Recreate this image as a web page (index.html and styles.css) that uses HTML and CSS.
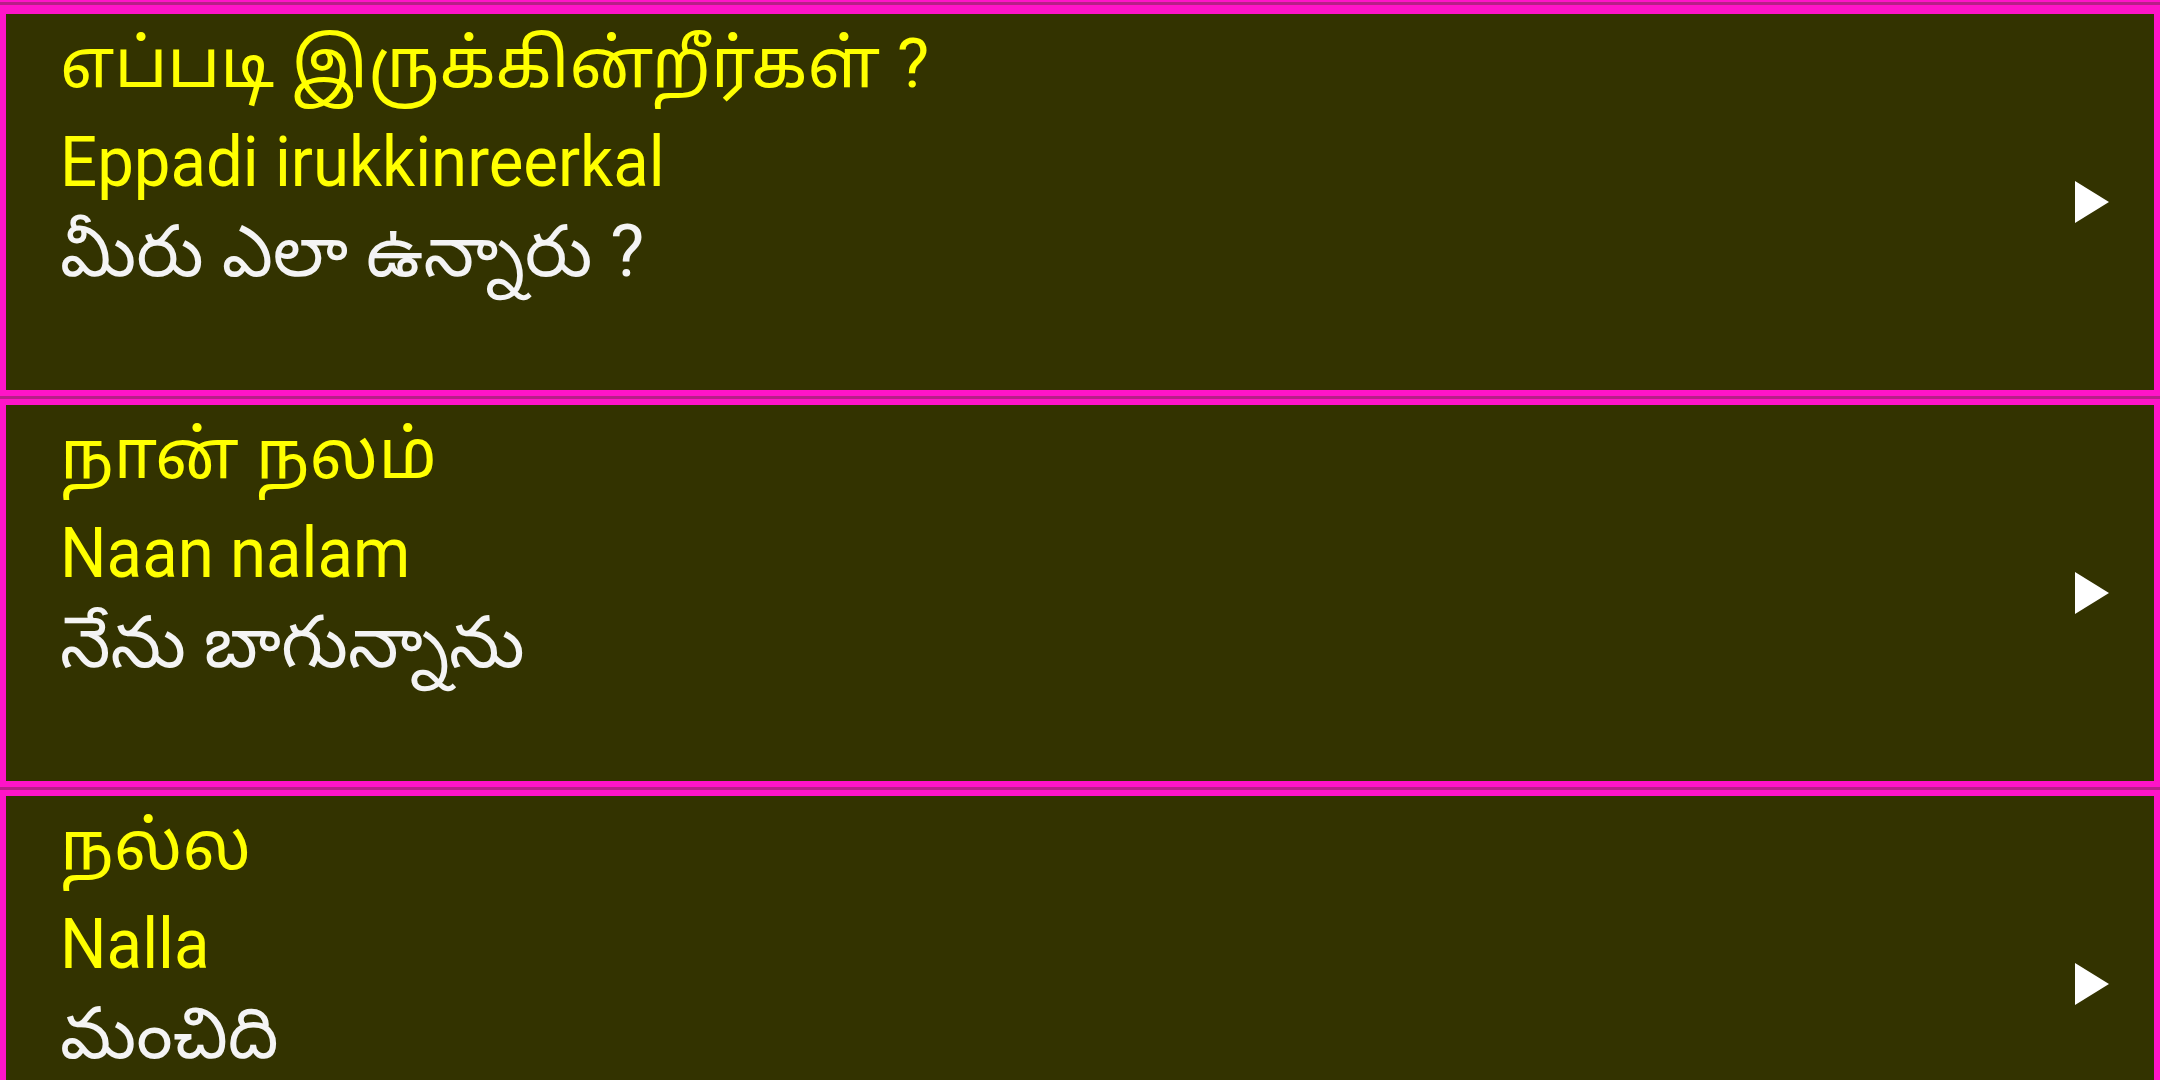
FILE: index.html
```html
<!DOCTYPE html>
<html lang="ta">
<head>
<meta charset="utf-8">
<title>Phrases</title>
<link rel="stylesheet" href="styles.css">
</head>
<body>
<div class="list">
  <div class="edge"></div>
  <div class="divider"></div>
  <div class="row first">
    <div class="cell">
      <div class="texts">
        <div class="tamil">எப்படி இருக்கின்றீர்கள் ?</div>
        <div class="latin">Eppadi irukkinreerkal</div>
        <div class="telugu" lang="te">మీరు ఎలా ఉన్నారు ?</div>
      </div>
      <svg class="play" viewBox="0 0 34 42" width="34" height="42"><polygon points="0,0 34,21 0,42" fill="#ffffff"/></svg>
    </div>
  </div>
  <div class="divider"></div>
  <div class="row">
    <div class="cell">
      <div class="texts">
        <div class="tamil">நான் நலம்</div>
        <div class="latin">Naan nalam</div>
        <div class="telugu" lang="te">నేను బాగున్నాను</div>
      </div>
      <svg class="play" viewBox="0 0 34 42" width="34" height="42"><polygon points="0,0 34,21 0,42" fill="#ffffff"/></svg>
    </div>
  </div>
  <div class="divider"></div>
  <div class="row">
    <div class="cell">
      <div class="texts">
        <div class="tamil">நல்ல</div>
        <div class="latin">Nalla</div>
        <div class="telugu" lang="te">మంచిది</div>
      </div>
      <svg class="play" viewBox="0 0 34 42" width="34" height="42"><polygon points="0,0 34,21 0,42" fill="#ffffff"/></svg>
    </div>
  </div>
</div>
</body>
</html>
```

FILE: styles.css
```css
html, body {
  margin: 0;
  padding: 0;
  background: #ff14c8;
  overflow: hidden;
}

body {
  width: 2160px;
  height: 1080px;
  font-family: Roboto, "Noto Sans Tamil", "Noto Sans Telugu", "Noto Sans", sans-serif;
}

.list {
  display: flex;
  flex-direction: column;
}

.edge {
  height: 2px;
  background: #ff14c8;
}

.divider {
  height: 3px;
  background: #b81e88;
}

.row {
  padding: 6px;
  background: #ff14c8;
}

.row.first {
  padding-top: 9px;
}

.cell {
  height: 376px;
  background: #333300;
  display: flex;
  align-items: center;
  box-sizing: border-box;
}

.texts {
  flex: 1;
  align-self: flex-start;
  padding: 4px 0 0 54px;
  line-height: 93px;
}

.tamil {
  color: #ffff00;
  font-size: 68px;
  white-space: nowrap;
}

.latin {
  margin-top: 4px;
  color: #ffff00;
  font-size: 71px;
  white-space: nowrap;
  transform: scaleX(0.92);
  transform-origin: left center;
}

.telugu {
  margin-top: -3px;
  color: #f4f4f4;
  font-size: 72px;
  white-space: nowrap;
}

.play {
  display: block;
  margin-right: 45px;
  flex: none;
}
```
